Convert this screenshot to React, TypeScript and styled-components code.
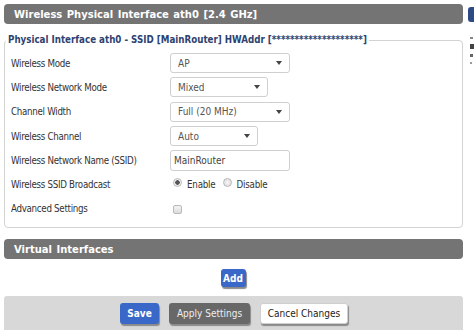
import React from "react"
import styled, { createGlobalStyle } from "styled-components"

const Global = createGlobalStyle`
  html, body {
    margin: 0;
    padding: 0;
    background: #fff;
    overflow: hidden;
  }
  body {
    font-family: "DejaVu Sans Condensed", "DejaVu Sans", sans-serif;
    font-size: 10px;
    color: #333;
  }
`

const Page = styled.div`
  display: flex;
  gap: 5px;
  padding: 4px 0 0 4px;
  width: 560px;
`

const Main = styled.div`
  width: 459px;
  display: flex;
  flex-direction: column;
  flex-shrink: 0;
`

const Bar = styled.div<{ $top?: number }>`
  height: 20px;
  margin-top: ${(p) => p.$top ?? 0}px;
  border-radius: 4px;
  background: #747474;
  color: #fff;
  font-family: "DejaVu Sans", sans-serif;
  font-weight: bold;
  font-size: 10px;
  word-spacing: 1px;
  display: flex;
  align-items: center;
  padding-left: 10px;
`

const Fieldset = styled.fieldset`
  margin: 9px 0 0;
  padding: 4px 6px 6px 6px;
  border: 1px solid #d3d3d3;
  border-radius: 4px;
`

const Legend = styled.legend`
  margin-left: -5px;
  padding: 0 2px;
  line-height: 14px;
  font-weight: bold;
  font-size: 9.7px;
  color: #2d4270;
`

const Grid = styled.div`
  display: grid;
  grid-template-columns: 159px 1fr;
  grid-auto-rows: 24.3px;
  align-items: center;
`

const Label = styled.div`
  font-size: 9.7px;
  letter-spacing: -0.3px;
  color: #333;
`

const SelectBox = styled.div<{ $w: number }>`
  width: ${(p) => p.$w}px;
  height: 20px;
  box-sizing: border-box;
  border: 1px solid #cfcfcf;
  border-radius: 3px;
  display: flex;
  align-items: center;
  justify-content: space-between;
  padding: 0 7px 0 7px;
  color: #555;
  font-size: 10px;
  background: #fff;
`

const Caret = styled.span`
  width: 0;
  height: 0;
  border-left: 3px solid transparent;
  border-right: 3px solid transparent;
  border-top: 4px solid #444;
`

const TextInput = styled.div`
  width: 120px;
  height: 21px;
  box-sizing: border-box;
  border: 1px solid #cfcfcf;
  border-radius: 3px;
  display: flex;
  align-items: center;
  padding-left: 3px;
  color: #444;
  font-size: 10px;
`

const RadioRow = styled.div`
  display: flex;
  align-items: center;
  padding-left: 3px;
`

const Radio = styled.span<{ $on?: boolean }>`
  width: 9px;
  height: 9px;
  box-sizing: border-box;
  border-radius: 50%;
  border: 1px solid #b8b8b8;
  background: ${(p) =>
    p.$on
      ? "radial-gradient(circle, #555 0 2px, #f2f2f2 2.5px)"
      : "radial-gradient(circle, #f6f6f6 0, #d8d8d8 100%)"};
  margin-top: -5px;
  margin-right: 5px;
`

const RadioText = styled.span`
  font-size: 9.7px;
  letter-spacing: -0.2px;
  color: #333;
  margin-right: 7px;
`

const Check = styled.span`
  display: block;
  width: 9px;
  height: 9px;
  margin-left: 3px;
  margin-top: 1px;
  box-sizing: border-box;
  border: 1px solid #b9b9b9;
  border-radius: 2px;
  background: linear-gradient(#f4f4f4, #dcdcdc);
`

const AddRow = styled.div`
  display: flex;
  justify-content: center;
  margin: 10px 0 9px;
  padding-right: 1px;
`

const Button = styled.div<{ $kind: "blue" | "gray" | "white"; $w: number; $h: number }>`
  width: ${(p) => p.$w}px;
  height: ${(p) => p.$h}px;
  box-sizing: border-box;
  display: flex;
  align-items: center;
  justify-content: center;
  border-radius: 3px;
  font-size: 10px;
  background: ${(p) => (p.$kind === "blue" ? "#3a68c9" : p.$kind === "gray" ? "#686868" : "#fff")};
  color: ${(p) => (p.$kind === "white" ? "#222" : p.$kind === "gray" ? "#eee" : "#fff")};
  font-weight: ${(p) => (p.$kind === "blue" ? "bold" : "normal")};
  box-shadow: 1px 2px 1px #8a8a8a;
  border: ${(p) => (p.$kind === "white" ? "1px solid #cfcfcf" : "none")};
`

const Footer = styled.div`
  background: #d8d8d8;
  border-radius: 3px 3px 0 0;
  height: 40px;
  display: flex;
  justify-content: center;
  gap: 10px;
  padding-top: 7px;
  padding-left: 1px;
  box-sizing: border-box;
`

const Side = styled.div`
  width: 90px;
  flex-shrink: 0;
  padding-top: 3px;
  display: flex;
  flex-direction: column;
`

const SideHead = styled.div`
  height: 15px;
  background: #2d4a86;
  border-radius: 3px;
`

const SideMarks = styled.div`
  margin-top: 15px;
  padding-left: 2px;
  display: flex;
  flex-direction: column;
  gap: 5px;
`

const Mark = styled.span<{ $w: number; $h: number; $c: string }>`
  display: block;
  width: ${(p) => p.$w}px;
  height: ${(p) => p.$h}px;
  background: ${(p) => p.$c};
`

type Row = { label: string; field: React.ReactNode }

const rows: Row[] = [
  { label: "Wireless Mode", field: <SelectBox $w={120}>AP<Caret /></SelectBox> },
  { label: "Wireless Network Mode", field: <SelectBox $w={98}>Mixed<Caret /></SelectBox> },
  { label: "Channel Width", field: <SelectBox $w={120}>Full (20 MHz)<Caret /></SelectBox> },
  { label: "Wireless Channel", field: <SelectBox $w={88}>Auto<Caret /></SelectBox> },
  { label: "Wireless Network Name (SSID)", field: <TextInput>MainRouter</TextInput> },
  {
    label: "Wireless SSID Broadcast",
    field: (
      <RadioRow>
        <Radio $on />
        <RadioText>Enable</RadioText>
        <Radio />
        <RadioText>Disable</RadioText>
      </RadioRow>
    ),
  },
  { label: "Advanced Settings", field: <Check /> },
]

export default function App() {
  return (
    <>
      <Global />
      <Page>
        <Main>
          <Bar>Wireless Physical Interface ath0 [2.4 GHz]</Bar>
          <Fieldset>
            <Legend>Physical Interface ath0 - SSID [MainRouter] HWAddr [********************]</Legend>
            <Grid>
              {rows.map((r) => (
                <React.Fragment key={r.label}>
                  <Label>{r.label}</Label>
                  <div>{r.field}</div>
                </React.Fragment>
              ))}
            </Grid>
          </Fieldset>
          <Bar $top={11}>Virtual Interfaces</Bar>
          <AddRow>
            <Button $kind="blue" $w={25} $h={18}>Add</Button>
          </AddRow>
          <Footer>
            <Button $kind="blue" $w={39} $h={21}>Save</Button>
            <Button $kind="gray" $w={81} $h={21}>Apply Settings</Button>
            <Button $kind="white" $w={88} $h={21}>Cancel Changes</Button>
          </Footer>
        </Main>
        <Side>
          <SideHead />
          <SideMarks>
            <Mark $w={3} $h={2} $c="#888" />
            <Mark $w={4} $h={5} $c="#444" />
            <Mark $w={3} $h={3} $c="#666" />
            <Mark $w={2} $h={2} $c="#999" />
          </SideMarks>
        </Side>
      </Page>
    </>
  )
}
